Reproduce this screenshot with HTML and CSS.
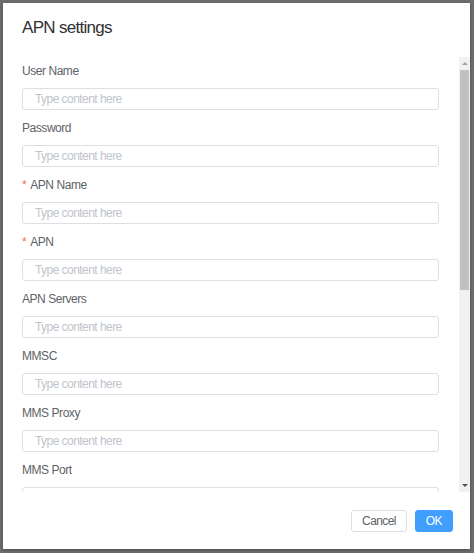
FILE: index.html
```
<!DOCTYPE html>
<html lang="en">
<head>
<meta charset="utf-8">
<title>APN settings</title>
<link rel="stylesheet" href="styles.css">
</head>
<body>
<div class="dialog">
  <div class="dialog-header">
    <span class="dialog-title">APN settings</span>
  </div>
  <div class="dialog-body">
    <div class="form">
      <div class="field">
        <label class="label">User Name</label>
        <input class="input" type="text" placeholder="Type content here">
      </div>
      <div class="field">
        <label class="label">Password</label>
        <input class="input" type="text" placeholder="Type content here">
      </div>
      <div class="field">
        <label class="label"><span class="req">*</span>APN Name</label>
        <input class="input" type="text" placeholder="Type content here">
      </div>
      <div class="field">
        <label class="label"><span class="req">*</span>APN</label>
        <input class="input" type="text" placeholder="Type content here">
      </div>
      <div class="field">
        <label class="label">APN Servers</label>
        <input class="input" type="text" placeholder="Type content here">
      </div>
      <div class="field">
        <label class="label">MMSC</label>
        <input class="input" type="text" placeholder="Type content here">
      </div>
      <div class="field">
        <label class="label">MMS Proxy</label>
        <input class="input" type="text" placeholder="Type content here">
      </div>
      <div class="field">
        <label class="label">MMS Port</label>
        <input class="input" type="text" placeholder="Type content here">
      </div>
    </div>
    <div class="scrollbar">
      <div class="sb-btn"><span class="tri-up"></span></div>
      <div class="sb-track">
        <div class="sb-thumb"></div>
      </div>
      <div class="sb-btn"><span class="tri-down"></span></div>
    </div>
  </div>
  <div class="dialog-footer">
    <button class="btn btn-default" type="button">Cancel</button>
    <button class="btn btn-primary" type="button">OK</button>
  </div>
</div>
</body>
</html>
```
FILE: styles.css
```
* {
  box-sizing: border-box;
}

html, body {
  margin: 0;
  height: 100%;
}

body {
  background: #6d6d6d;
  padding: 3px 4px 4px 3px;
  font-family: "Liberation Sans", Arial, sans-serif;
  overflow: hidden;
}

.dialog {
  width: 467px;
  height: 546px;
  background: #ffffff;
  display: flex;
  flex-direction: column;
  box-shadow: 0 1px 3px rgba(0, 0, 0, 0.3);
}

.dialog-header {
  padding: 13px 19px 17px;
  height: 54px;
}

.dialog-title {
  display: block;
  font-size: 17px;
  line-height: 24px;
  letter-spacing: -0.7px;
  color: #303133;
}

.dialog-body {
  height: 435px;
  display: flex;
  overflow: hidden;
}

.form {
  flex: 1;
  padding: 6px 20px 0 19px;
  overflow: hidden;
}

.field {
  display: flex;
  flex-direction: column;
  padding-bottom: 10px;
}

.label {
  display: block;
  font-size: 12px;
  line-height: 16px;
  letter-spacing: -0.45px;
  color: #606266;
  margin-bottom: 9px;
}

.req {
  color: #f56c6c;
  margin-right: 4px;
}

.input {
  display: block;
  width: 100%;
  height: 22px;
  border: 1px solid #dcdfe6;
  border-radius: 3px;
  padding: 0 12px;
  font-family: "Liberation Sans", Arial, sans-serif;
  font-size: 12px;
  letter-spacing: -0.55px;
  color: #606266;
  background: #ffffff;
  outline: none;
}

.input::placeholder {
  color: #c0c4cc;
}

.scrollbar {
  width: 11px;
  display: flex;
  flex-direction: column;
  background: #f1f1f1;
}

.sb-btn {
  height: 13px;
  display: flex;
  align-items: center;
  justify-content: center;
}

.tri-up {
  width: 0;
  height: 0;
  border-left: 3px solid transparent;
  border-right: 3px solid transparent;
  border-bottom: 3px solid #a3a3a3;
}

.tri-down {
  width: 0;
  height: 0;
  border-left: 3px solid transparent;
  border-right: 3px solid transparent;
  border-top: 3px solid #505050;
}

.sb-track {
  flex: 1;
  padding: 0 1px;
}

.sb-thumb {
  height: 220px;
  background: #c1c1c1;
}

.dialog-footer {
  display: flex;
  justify-content: flex-end;
  gap: 8px;
  padding: 18px 17px 17px;
}

.btn {
  height: 22px;
  border-radius: 3px;
  font-family: "Liberation Sans", Arial, sans-serif;
  font-size: 12px;
  letter-spacing: -0.6px;
  line-height: 20px;
  cursor: pointer;
}

.btn-default {
  padding: 0 10px;
  background: #ffffff;
  border: 1px solid #dcdfe6;
  color: #606266;
}

.btn-primary {
  padding: 0 10px;
  background: #409eff;
  border: 1px solid #409eff;
  color: #ffffff;
}
```
